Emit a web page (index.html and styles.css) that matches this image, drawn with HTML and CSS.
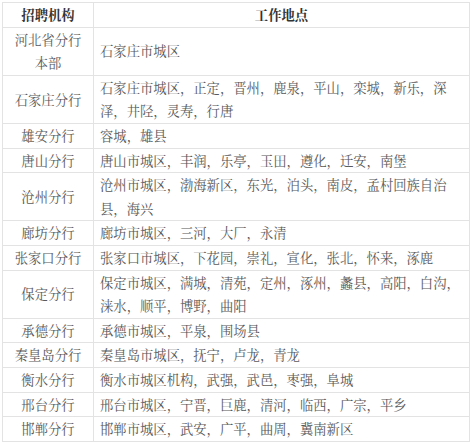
FILE: index.html
```html
<!DOCTYPE html>
<html lang="zh-CN">
<head>
<meta charset="utf-8">
<link rel="stylesheet" href="styles.css">
</head>
<body>
<table class="jobs">
  <colgroup><col class="c1"><col class="c2"></colgroup>
  <thead>
    <tr><th>招聘机构</th><th>工作地点</th></tr>
  </thead>
  <tbody>
    <tr><td class="org">河北省分行<br>本部</td><td class="loc">石家庄市城区</td></tr>
    <tr><td class="org">石家庄分行</td><td class="loc">石家庄市城区，正定，晋州，鹿泉，平山，栾城，新乐，深<br>泽，井陉，灵寿，行唐</td></tr>
    <tr><td class="org">雄安分行</td><td class="loc">容城，雄县</td></tr>
    <tr><td class="org">唐山分行</td><td class="loc">唐山市城区，丰润，乐亭，玉田，遵化，迁安，南堡</td></tr>
    <tr><td class="org">沧州分行</td><td class="loc">沧州市城区，渤海新区，东光，泊头，南皮，孟村回族自治<br>县，海兴</td></tr>
    <tr><td class="org">廊坊分行</td><td class="loc">廊坊市城区，三河，大厂，永清</td></tr>
    <tr><td class="org">张家口分行</td><td class="loc">张家口市城区，下花园，崇礼，宣化，张北，怀来，涿鹿</td></tr>
    <tr><td class="org">保定分行</td><td class="loc">保定市城区，满城，清苑，定州，涿州，蠡县，高阳，白沟，<br>涞水，顺平，博野，曲阳</td></tr>
    <tr><td class="org">承德分行</td><td class="loc">承德市城区，平泉，围场县</td></tr>
    <tr><td class="org">秦皇岛分行</td><td class="loc">秦皇岛市城区，抚宁，卢龙，青龙</td></tr>
    <tr><td class="org">衡水分行</td><td class="loc">衡水市城区机构，武强，武邑，枣强，阜城</td></tr>
    <tr><td class="org">邢台分行</td><td class="loc">邢台市城区，宁晋，巨鹿，清河，临西，广宗，平乡</td></tr>
    <tr><td class="org">邯郸分行</td><td class="loc">邯郸市城区，武安，广平，曲周，冀南新区</td></tr>
  </tbody>
</table>
</body>
</html>
```
FILE: styles.css
```css
html, body {
  margin: 0;
  padding: 0;
  background: #ffffff;
}
body {
  padding: 2px 0 0 2px;
  font-family: "Noto Serif CJK SC", "Noto Sans CJK SC", serif;
  font-size: 13.33px;
  color: #595959;
}
.jobs {
  border-collapse: collapse;
  table-layout: fixed;
  width: 468px;
}
.c1 { width: 91px; }
.jobs th, .jobs td {
  border: 1px solid #e3e3e3;
  line-height: 23.6px;
  padding: 0 6px;
  white-space: nowrap;
  vertical-align: middle;
}
.jobs th {
  font-weight: bold;
  color: #333333;
  text-align: center;
}
.org { text-align: center; }
.loc { text-align: left; }
```
